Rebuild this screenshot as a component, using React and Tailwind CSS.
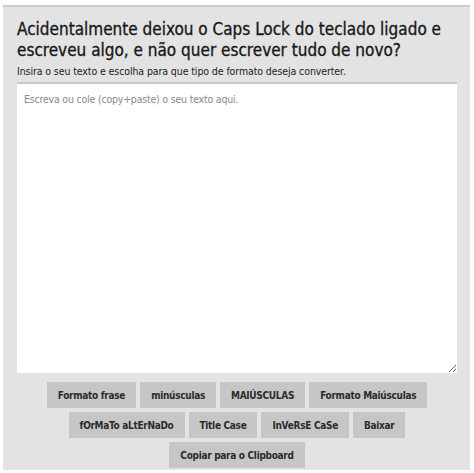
import React, { useState } from 'react';

const buttons = [
  'Formato frase',
  'minúsculas',
  'MAIÚSCULAS',
  'Formato Maiúsculas',
  'fOrMaTo aLtErNaDo',
  'Title Case',
  'InVeRsE CaSe',
  'Baixar',
  'Copiar para o Clipboard',
];

const App = () => {
  const [text, setText] = useState('');

  return (
    <div className="w-[474px] h-[473px] bg-white pt-[5px] pl-[3px] font-['DejaVu_Sans_Condensed','DejaVu_Sans',sans-serif]">
      <div className="w-[467px] h-[465px] bg-[#e3e3e3] border-t-2 border-[#cbcbcb] px-[14px] pt-[12px]">
        <h1 className="text-[17px] leading-[21px] text-[#161616] font-normal [-webkit-text-stroke:0.3px_#161616]">
          Acidentalmente deixou o Caps Lock do teclado ligado e escreveu algo, e não quer escrever tudo de novo?
        </h1>
        <p className="mt-[3px] text-[10.5px] leading-[14px] tracking-[-0.1px] text-[#222]">
          Insira o seu texto e escolha para que tipo de formato deseja converter.
        </p>
        <textarea
          value={text}
          onChange={e => setText(e.target.value)}
          placeholder="Escreva ou cole (copy+paste) o seu texto aqui."
          className="mt-[4px] block w-[440px] h-[291px] bg-white border-t-2 border-[#c9c9c9] px-[7px] py-[8px] text-[10.5px] leading-[14px] tracking-[-0.2px] text-[#333] placeholder:text-[#8a8a8a] outline-none"
        />
        <div className="mt-[9px] w-[440px] flex flex-wrap justify-center gap-[4px]">
          {buttons.map(b => (
            <button
              key={b}
              type="button"
              className="h-[26px] px-[11px] bg-[#c6c6c6] text-[10px] tracking-[-0.3px] font-bold text-[#2b2b2b]"
            >
              {b}
            </button>
          ))}
        </div>
      </div>
    </div>
  );
};

export default App;
